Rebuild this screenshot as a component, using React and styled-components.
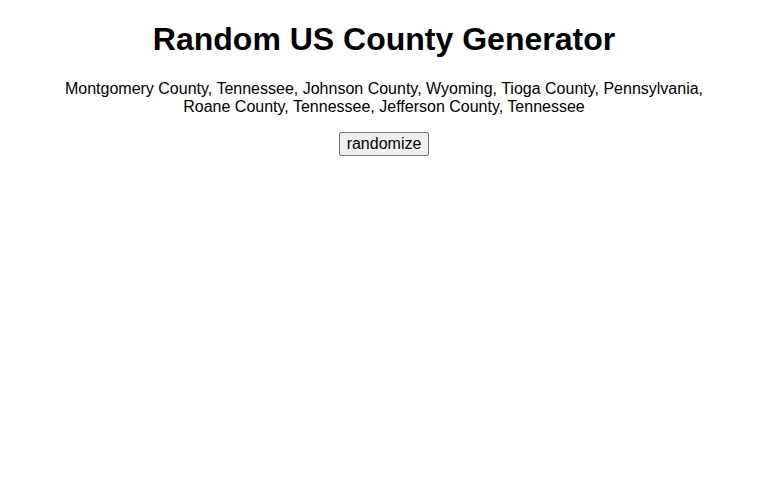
import React from "react";
import styled, { createGlobalStyle } from "styled-components";

const Global = createGlobalStyle`
  body { margin: 0; background: #fff; font-family: "Liberation Sans", Arial, sans-serif; color: #000; }
`;

const Page = styled.div`
  text-align: center;
  padding: 0 8px;
`;

const Title = styled.h1`
  font-size: 32px;
  font-weight: bold;
  margin: 21.44px 0;
`;

const List = styled.p`
  font-size: 16px;
  max-width: 640px;
  margin: 16px auto;
`;

const Button = styled.button`
  font-family: "Liberation Sans", Arial, sans-serif;
  font-size: 16px;
  padding: 2px 7px;
  background: #efefef;
  border: 1px solid #767676;
  border-radius: 2px;
  color: #000;
  line-height: 18px;
`;

export default function App() {
  return (
    <>
      <Global />
      <Page>
        <Title>Random US County Generator</Title>
        <List>
          Montgomery County, Tennessee, Johnson County, Wyoming, Tioga County, Pennsylvania, Roane County, Tennessee, Jefferson County, Tennessee
        </List>
        <Button>randomize</Button>
      </Page>
    </>
  );
}
